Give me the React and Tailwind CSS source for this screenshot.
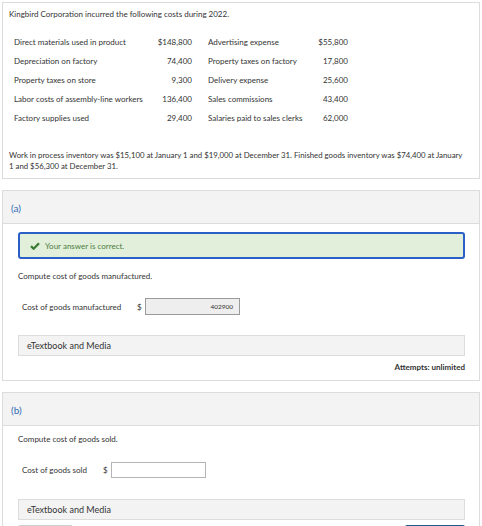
import React from "react";

const costs = [
  ["Direct materials used in product", "$148,800", "Advertising expense", "$55,800"],
  ["Depreciation on factory", "74,400", "Property taxes on factory", "17,800"],
  ["Property taxes on store", "9,300", "Delivery expense", "25,600"],
  ["Labor costs of assembly-line workers", "136,400", "Sales commissions", "43,400"],
  ["Factory supplies used", "29,400", "Salaries paid to sales clerks", "62,000"],
];

const font = { fontFamily: "Lato, 'Open Sans', sans-serif" };

const PartHeader = ({ label }) => (
  <div className="h-[33px] flex items-center pl-[8px] pt-[2px] bg-[#f3f3f3] border-b border-[#dcdcdc] text-[10px] text-[#2f6db3]">
    {label}
  </div>
);

const MediaBar = ({ className = "" }) => (
  <div className={`h-[21px] flex items-center pl-[8px] bg-[#f3f3f3] border border-[#dcdcdc] text-[9px] text-[#333] ${className}`}>
    eTextbook and Media
  </div>
);

export default function App() {
  return (
    <div className="min-h-[526px] bg-white px-[2px] pt-[2px] text-[#333] overflow-hidden" style={font}>
      <div className="border border-[#dcdcdc] pl-[6px] pr-[6px] pt-[6px] pb-[6px]">
        <p className="text-[8px] leading-[10px]">Kingbird Corporation incurred the following costs during 2022.</p>
        <div className="mt-[13px] ml-[5px] text-[8px]">
          {costs.map((r) => (
            <div key={r[0]} className="flex items-center h-[19px]">
              <span className="w-[136px]">{r[0]}</span>
              <span className="w-[42px] text-right">{r[1]}</span>
              <span className="w-[100px] ml-[16px]">{r[2]}</span>
              <span className="w-[40px] text-right">{r[3]}</span>
            </div>
          ))}
        </div>
        <p className="mt-[23px] text-[7.8px] leading-[11px] pr-[7px]">
          Work in process inventory was $15,100 at January 1 and $19,000 at December 31. Finished goods inventory was $74,400 at January 1 and $56,300 at December 31.
        </p>
      </div>

      <div className="mt-[11px] border border-[#dcdcdc]">
        <PartHeader label="(a)" />
        <div className="pl-[15px] pr-[14px] pt-[8px] pb-[8px]">
          <div className="h-[27px] flex items-center rounded-[3px] border-2 border-[#2a5fc8] bg-[#e2efda] pl-[10px]">
            <svg width="10" height="8" viewBox="0 0 12 10" className="mr-[5px]">
              <path d="M1 5.2 L4.3 8.4 L11 1.6" fill="none" stroke="#3b7a32" strokeWidth="2.8" />
            </svg>
            <span className="text-[8px] text-[#4b7d42]">Your answer is correct.</span>
          </div>
          <p className="mt-[12px] text-[8px] leading-[10px]">Compute cost of goods manufactured.</p>
          <div className="mt-[17px] flex items-center h-[17px] pl-[4px] text-[8px]">
            <span className="w-[115px]">Cost of goods manufactured</span>
            <span className="w-[8px]">$</span>
            <div className="w-[95px] h-[17px] border border-[#9a9a9a] bg-[#eeeeee] flex items-center justify-end pr-[6px] text-[6.5px]">
              402900
            </div>
          </div>
          <MediaBar className="mt-[20px]" />
          <div className="mt-[6px] text-right text-[8px] leading-[10px] font-bold">Attempts: unlimited</div>
        </div>
      </div>

      <div className="mt-[11px] border border-[#dcdcdc] border-b-0">
        <PartHeader label="(b)" />
        <div className="pl-[15px] pr-[14px] pt-[8px]">
          <p className="text-[8px] leading-[10px]">Compute cost of goods sold.</p>
          <div className="mt-[18px] flex items-center h-[16px] pl-[4px] text-[8px]">
            <span className="w-[81px]">Cost of goods sold</span>
            <span className="w-[8px]">$</span>
            <div className="w-[95px] h-[16px] border border-[#b5b5b5] bg-white" />
          </div>
          <MediaBar className="mt-[21px]" />
          <div className="mt-[5px] flex justify-between">
            <div className="w-[55px] h-[20px] border border-[#cfcfcf] rounded-[2px] bg-white" />
            <div className="w-[60px] h-[20px] rounded-[2px] bg-[#2b6ca3] border-t-2 border-[#1f5a8c]" />
          </div>
        </div>
      </div>
    </div>
  );
}
